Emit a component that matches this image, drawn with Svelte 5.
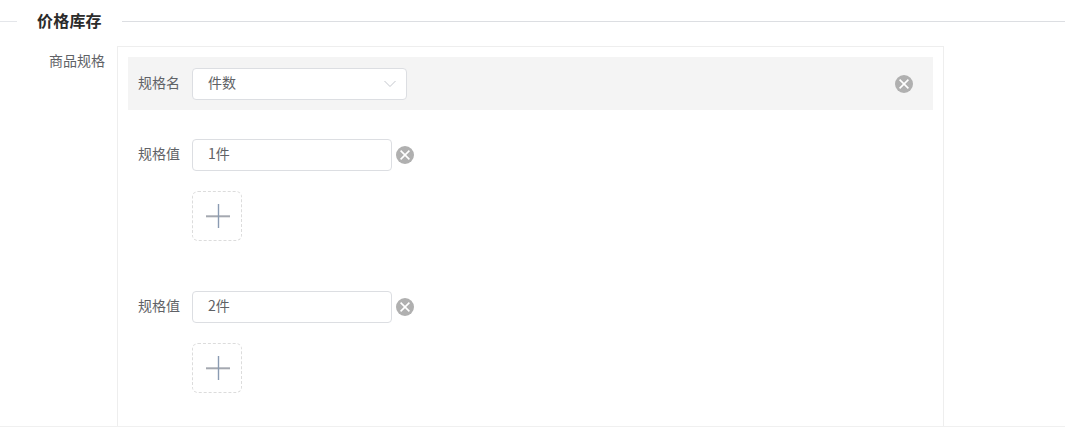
<script>
  const rows = [
    { value: '1件' },
    { value: '2件' }
  ];
</script>

<div class="page">
  <div class="divider">
    <span class="line short"></span>
    <h2>价格库存</h2>
    <span class="line"></span>
  </div>

  <div class="field">
    <div class="field-label">商品规格</div>
    <div class="spec-box">
      <div class="spec-head">
        <span class="lbl">规格名</span>
        <div class="control select">
          <span>件数</span>
          <svg class="arrow" width="14" height="8" viewBox="0 0 14 8"><path d="M1.5 1 L7 6.5 L12.5 1" fill="none" stroke="#c5c8ce" stroke-width="1"/></svg>
        </div>
        <svg class="close head-close" width="18" height="18" viewBox="0 0 18 18"><circle cx="9" cy="9" r="9" fill="#b0b0b0"/><path d="M4.6 4.6 L13.4 13.4 M13.4 4.6 L4.6 13.4" stroke="#fff" stroke-width="1.6"/></svg>
      </div>

      {#each rows as row}
        <div class="spec-value">
          <div class="value-row">
            <span class="lbl">规格值</span>
            <div class="control input">{row.value}</div>
            <svg class="close" width="18" height="18" viewBox="0 0 18 18"><circle cx="9" cy="9" r="9" fill="#b0b0b0"/><path d="M4.6 4.6 L13.4 13.4 M13.4 4.6 L4.6 13.4" stroke="#fff" stroke-width="1.6"/></svg>
          </div>
          <div class="upload">
            <svg width="24" height="24" viewBox="0 0 24 24"><path d="M0 12.3 H24" stroke="#a4a8b0" stroke-width="2"/><path d="M12.5 0 V24" stroke="#8a9bb2" stroke-width="1.4"/></svg>
          </div>
        </div>
      {/each}
    </div>
  </div>
</div>

<style>
  :global(body) {
    margin: 0;
    background: #fff;
  }
  .page {
    height: 427px;
    box-sizing: border-box;
    border-bottom: 1px solid #f0f0f0;
    overflow: hidden;
    padding-top: 9px;
    font-family: "Noto Sans CJK SC", "Liberation Sans", sans-serif;
    font-size: 14px;
    color: #606266;
  }
  .divider {
    display: flex;
    align-items: center;
    height: 24px;
  }
  .line {
    flex: 1;
    height: 1px;
    background: #dcdee2;
  }
  .line.short {
    flex: 0 0 17px;
    background: #e4e6ea;
  }
  h2 {
    margin: 0;
    padding: 0 20px 2px;
    font-size: 16px;
    line-height: 22px;
    font-weight: 700;
    letter-spacing: 0.2px;
    color: #2b2b2b;
    width: 65px;
  }
  .field {
    display: flex;
    margin-top: 13px;
  }
  .field-label {
    width: 105px;
    flex: none;
    text-align: right;
    line-height: 28px;
  }
  .spec-box {
    margin-left: 12px;
    width: 827px;
    box-sizing: border-box;
    height: 400px;
    border: 1px solid #eeeeee;
    padding: 10px;
  }
  .spec-head {
    display: flex;
    align-items: center;
    height: 53px;
    padding: 0 20px 0 10px;
    background: #f4f4f4;
  }
  .lbl {
    width: 54px;
    flex: none;
    padding-bottom: 4px;
  }
  .control {
    box-sizing: border-box;
    height: 32px;
    border: 1px solid #dcdee2;
    border-radius: 4px;
    background: #fff;
    padding-left: 15px;
    line-height: 27px;
  }
  .select {
    width: 215px;
    display: flex;
    align-items: center;
    justify-content: space-between;
    padding-right: 9px;
  }
  .select span {
    padding-bottom: 2px;
  }
  .input {
    width: 200px;
  }
  .close {
    flex: none;
  }
  .head-close {
    margin-left: auto;
  }
  .spec-value {
    padding: 29px 0 0 10px;
    height: 123px;
  }
  .value-row {
    display: flex;
    align-items: center;
  }
  .value-row .close {
    margin-left: 4px;
  }
  .upload {
    box-sizing: border-box;
    width: 50px;
    height: 50px;
    margin: 20px 0 0 54px;
    padding-left: 1px;
    border: 1px dashed #dcdcdc;
    border-radius: 6px;
    display: flex;
    align-items: center;
    justify-content: center;
  }
</style>
